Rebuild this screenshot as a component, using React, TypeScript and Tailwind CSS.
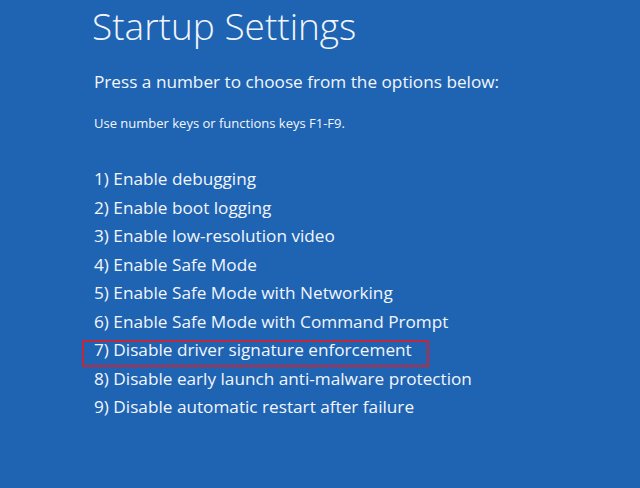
const OPTIONS = [
  '1) Enable debugging',
  '2) Enable boot logging',
  '3) Enable low-resolution video',
  '4) Enable Safe Mode',
  '5) Enable Safe Mode with Networking',
  '6) Enable Safe Mode with Command Prompt',
  '7) Disable driver signature enforcement',
  '8) Disable early launch anti-malware protection',
  '9) Disable automatic restart after failure',
]

export default function App() {
  return (
    <div
      className="h-[488px] w-[640px] overflow-hidden bg-[#1f63b3] text-[#f2f6fb]"
      style={{ fontFamily: '"Open Sans", "Noto Sans", sans-serif' }}
    >
      <div className="pl-[92px] pt-[4px]">
        <h1 className="text-[37px] font-light leading-[44px]">Startup Settings</h1>
        <p className="mt-[22px] pl-[2px] text-[17.2px] leading-[24px]">
          Press a number to choose from the options below:
        </p>
        <p className="mt-[21px] pl-[2px] text-[13px] leading-[16px]">
          Use number keys or functions keys F1-F9.
        </p>
        <ul className="mt-[34px] flex flex-col">
          {OPTIONS.map((o, i) => (
            <li key={o} className="relative h-[28.5px] pl-[2px] text-[17.2px] leading-[28.5px]">
              {i === 6 && (
                <span className="absolute left-[-10px] top-[4px] h-[27px] w-[347px] border-2 border-[#c2283d]" />
              )}
              {o}
            </li>
          ))}
        </ul>
      </div>
    </div>
  )
}
